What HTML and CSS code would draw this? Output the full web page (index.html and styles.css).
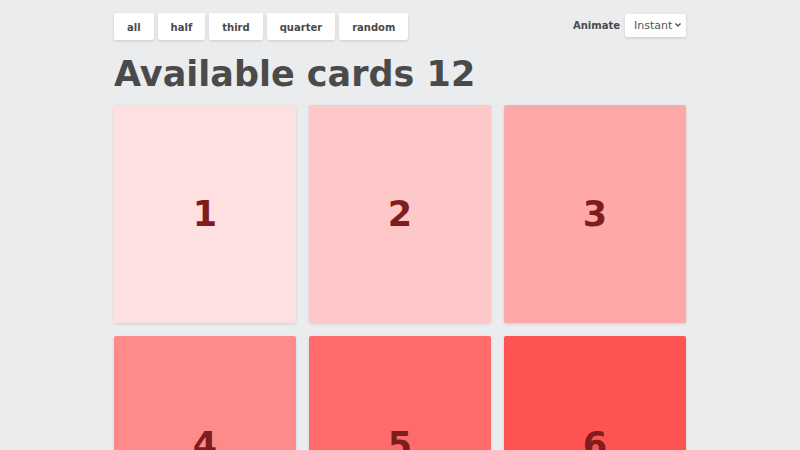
FILE: index.html
```html
<!DOCTYPE html>
<html>
<head>
<meta charset="utf-8">
<link rel="stylesheet" href="styles.css">
</head>
<body>
<div class="wrap">
  <div class="toolbar">
    <div class="buttons">
      <button class="btn">all</button>
      <button class="btn">half</button>
      <button class="btn">third</button>
      <button class="btn">quarter</button>
      <button class="btn">random</button>
    </div>
    <div class="anim">
      <span class="anim-label">Animate</span>
      <div class="select">Instant <svg width="8" height="6" viewBox="0 0 8 6"><path d="M1.5 1.5 L4 4 L6.5 1.5" fill="none" stroke="#555" stroke-width="1.5"/></svg></div>
    </div>
  </div>
  <h1 class="title">Available cards 12</h1>
  <div class="grid">
    <div class="card c1">1</div>
    <div class="card c2">2</div>
    <div class="card c3">3</div>
    <div class="card c4">4</div>
    <div class="card c5">5</div>
    <div class="card c6">6</div>
  </div>
</div>
</body>
</html>
```
FILE: styles.css
```css
html, body { margin: 0; padding: 0; }
body {
  background: #ebecee;
  font-family: "DejaVu Sans", sans-serif;
  color: #4a4a4a;
  height: 450px;
  overflow: hidden;
}
.wrap {
  width: 572px;
  margin: 0 auto;
  padding-top: 13px;
}
.toolbar {
  display: flex;
  justify-content: space-between;
  align-items: flex-start;
}
.buttons { display: flex; gap: 4px; }
.btn {
  font-family: "DejaVu Sans", sans-serif;
  font-weight: bold;
  font-size: 10px;
  color: #4a4a4a;
  background: #fff;
  border: none;
  border-radius: 2px;
  height: 27px;
  padding: 1px 13px 0;
  box-shadow: 0 1px 3px rgba(0,0,0,0.15);
}
.anim { display: flex; align-items: center; gap: 5px; height: 24px; }
.anim-label { font-weight: bold; font-size: 10px; color: #4a4a4a; }
.select {
  display: flex; align-items: center; justify-content: space-between;
  width: 61px; height: 23px; box-sizing: border-box;
  padding: 0 4px 0 9px;
  background: #fff;
  border-radius: 2px;
  font-size: 11px;
  color: #555;
  box-shadow: 0 1px 3px rgba(0,0,0,0.15);
}
.title {
  margin: 13px 0 10px;
  font-size: 35px;
  font-weight: bold;
  line-height: 42px;
  color: #4a4a4a;
}
.grid {
  display: grid;
  grid-template-columns: repeat(3, 182px);
  grid-auto-rows: 218px;
  gap: 13px;
}
.card {
  display: flex; align-items: center; justify-content: center;
  font-size: 35px; font-weight: bold; color: #7f1d1d;
  border-radius: 2px;
  box-shadow: 0 1px 3px rgba(0,0,0,0.12);
}
.c1 { background: #ffe0e0; }
.c2 { background: #ffc8c8; }
.c3 { background: #ffa8a8; }
.c4 { background: #ff8a8a; }
.c5 { background: #ff6b6b; }
.c6 { background: #ff5252; }
```
